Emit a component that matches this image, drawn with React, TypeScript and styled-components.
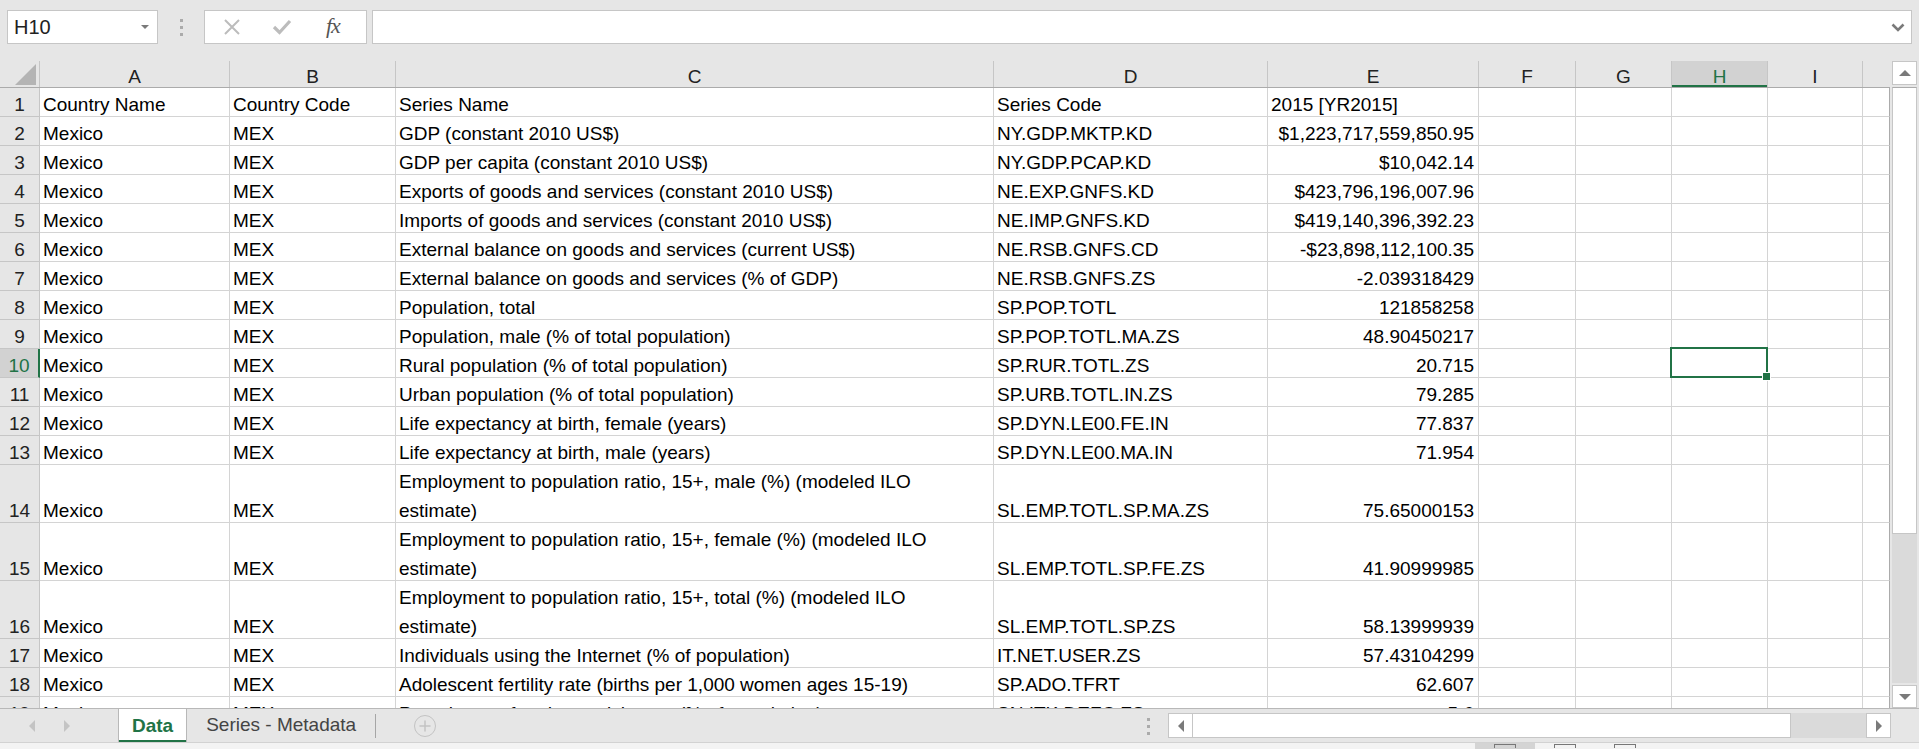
import React from 'react'
import styled, { createGlobalStyle } from 'styled-components'

const GREEN = '#217346'
const GRID = '#d4d4d4'
const FONT = `'Liberation Sans', Arial, sans-serif`

// widths of row header + columns A..J, measured from the sheet
const COLS = [40, 190, 166, 598, 274, 211, 97, 96, 96, 95, 27]
const TEMPLATE = COLS.map((c) => c + 'px').join(' ')
const LETTERS = ['A', 'B', 'C', 'D', 'E', 'F', 'G', 'H', 'I', '']
const SEL_COL = 7
const SEL_ROW = 10

type RowData = {
    n: number
    cells: [string, string, string | string[], string, string]
    header?: boolean
}

const emp = (who: string): string[] => [
    `Employment to population ratio, 15+, ${who} (%) (modeled ILO`,
    'estimate)',
]

const ROWS: RowData[] = [
    { n: 1, header: true, cells: ['Country Name', 'Country Code', 'Series Name', 'Series Code', '2015 [YR2015]'] },
    { n: 2, cells: ['Mexico', 'MEX', 'GDP (constant 2010 US$)', 'NY.GDP.MKTP.KD', '$1,223,717,559,850.95'] },
    { n: 3, cells: ['Mexico', 'MEX', 'GDP per capita (constant 2010 US$)', 'NY.GDP.PCAP.KD', '$10,042.14'] },
    { n: 4, cells: ['Mexico', 'MEX', 'Exports of goods and services (constant 2010 US$)', 'NE.EXP.GNFS.KD', '$423,796,196,007.96'] },
    { n: 5, cells: ['Mexico', 'MEX', 'Imports of goods and services (constant 2010 US$)', 'NE.IMP.GNFS.KD', '$419,140,396,392.23'] },
    { n: 6, cells: ['Mexico', 'MEX', 'External balance on goods and services (current US$)', 'NE.RSB.GNFS.CD', '-$23,898,112,100.35'] },
    { n: 7, cells: ['Mexico', 'MEX', 'External balance on goods and services (% of GDP)', 'NE.RSB.GNFS.ZS', '-2.039318429'] },
    { n: 8, cells: ['Mexico', 'MEX', 'Population, total', 'SP.POP.TOTL', '121858258'] },
    { n: 9, cells: ['Mexico', 'MEX', 'Population, male (% of total population)', 'SP.POP.TOTL.MA.ZS', '48.90450217'] },
    { n: 10, cells: ['Mexico', 'MEX', 'Rural population (% of total population)', 'SP.RUR.TOTL.ZS', '20.715'] },
    { n: 11, cells: ['Mexico', 'MEX', 'Urban population (% of total population)', 'SP.URB.TOTL.IN.ZS', '79.285'] },
    { n: 12, cells: ['Mexico', 'MEX', 'Life expectancy at birth, female (years)', 'SP.DYN.LE00.FE.IN', '77.837'] },
    { n: 13, cells: ['Mexico', 'MEX', 'Life expectancy at birth, male (years)', 'SP.DYN.LE00.MA.IN', '71.954'] },
    { n: 14, cells: ['Mexico', 'MEX', emp('male'), 'SL.EMP.TOTL.SP.MA.ZS', '75.65000153'] },
    { n: 15, cells: ['Mexico', 'MEX', emp('female'), 'SL.EMP.TOTL.SP.FE.ZS', '41.90999985'] },
    { n: 16, cells: ['Mexico', 'MEX', emp('total'), 'SL.EMP.TOTL.SP.ZS', '58.13999939'] },
    { n: 17, cells: ['Mexico', 'MEX', 'Individuals using the Internet (% of population)', 'IT.NET.USER.ZS', '57.43104299'] },
    { n: 18, cells: ['Mexico', 'MEX', 'Adolescent fertility rate (births per 1,000 women ages 15-19)', 'SP.ADO.TFRT', '62.607'] },
    { n: 19, cells: ['Mexico', 'MEX', 'Prevalence of undernourishment (% of population)', 'SN.ITK.DEFC.ZS', '5.6'] },
]

const GlobalStyle = createGlobalStyle`
    html, body {
        margin: 0;
        padding: 0;
        background: #e6e6e6;
    }
    * { box-sizing: border-box; }
`

const Window = styled.div`
    width: 1919px;
    height: 749px;
    overflow: hidden;
    display: flex;
    flex-direction: column;
    background: #e6e6e6;
    font-family: ${FONT};
    color: #000;
`

/* ---------- formula bar ---------- */

const FormulaBar = styled.div`
    height: 61px;
    flex: none;
    display: flex;
    align-items: flex-start;
    padding: 10px 7px 0 7px;
`

const NameBox = styled.div`
    width: 151px;
    height: 34px;
    background: #fff;
    border: 1px solid #c6c6c6;
    display: flex;
    align-items: center;
    justify-content: space-between;
    padding: 0 8px 0 6px;
    font-size: 20px;
    color: #222;
`

const Caret = styled.span`
    width: 0;
    height: 0;
    border-left: 4px solid transparent;
    border-right: 4px solid transparent;
    border-top: 4px solid #7a7a7a;
`

const Grip = styled.div<{ $w: number }>`
    width: ${(p) => p.$w}px;
    height: 34px;
    display: flex;
    flex-direction: column;
    align-items: center;
    justify-content: center;
    gap: 4px;
    flex: none;
    span {
        width: 3px;
        height: 3px;
        background: #ababab;
    }
`

const FxButtons = styled.div`
    width: 163px;
    height: 34px;
    background: #fff;
    border: 1px solid #c6c6c6;
    display: grid;
    grid-template-columns: 1fr 1fr 1fr;
    align-items: center;
    justify-items: center;
    padding: 0 8px 0 2px;
`

const FxLabel = styled.span`
    font-family: 'Liberation Serif', 'Times New Roman', serif;
    font-style: italic;
    font-size: 22px;
    color: #555;
    letter-spacing: -1px;
    margin-top: -2px;
`

const FormulaInput = styled.div`
    flex: 1;
    height: 34px;
    margin-left: 5px;
    background: #fff;
    border: 1px solid #c6c6c6;
    display: flex;
    align-items: center;
    justify-content: flex-end;
    padding-right: 6px;
`

/* ---------- sheet ---------- */

const Main = styled.div`
    height: 647px;
    flex: none;
    display: flex;
`

const Sheet = styled.div`
    width: 1890px;
    display: flex;
    flex-direction: column;
    overflow: hidden;
`

const HeaderRow = styled.div`
    display: grid;
    grid-template-columns: ${TEMPLATE};
    height: 27px;
    flex: none;
    border-bottom: 1px solid #ababab;
`

const Corner = styled.div`
    position: relative;
    border-right: 1px solid #c6c6c6;
    &::after {
        content: '';
        position: absolute;
        right: 3px;
        bottom: 2px;
        width: 21px;
        height: 21px;
        background: #b4b4b4;
        clip-path: polygon(100% 0, 100% 100%, 0 100%);
    }
`

const ColHead = styled.div<{ $sel?: boolean; $last?: boolean }>`
    display: flex;
    align-items: flex-end;
    justify-content: center;
    font-size: 19px;
    line-height: 27px;
    color: ${(p) => (p.$sel ? GREEN : '#222')};
    background: ${(p) => (p.$sel ? '#d2d2d2' : 'transparent')};
    border-right: ${(p) => (p.$last ? 'none' : '1px solid #c6c6c6')};
    box-shadow: ${(p) => (p.$sel ? `inset 0 -2px 0 ${GREEN}` : 'none')};
    span {
        margin-bottom: -3px;
    }
`

const Body = styled.div`
    flex: 1;
    overflow: hidden;
    background: #fff;
`

const Row = styled.div<{ $h: number }>`
    display: grid;
    grid-template-columns: ${TEMPLATE};
    height: ${(p) => p.$h}px;
`

const RowHead = styled.div<{ $sel?: boolean }>`
    display: flex;
    flex-direction: column;
    justify-content: flex-end;
    align-items: center;
    font-size: 19px;
    line-height: 29px;
    background: ${(p) => (p.$sel ? '#d2d2d2' : '#e6e6e6')};
    color: ${(p) => (p.$sel ? GREEN : '#222')};
    border-bottom: 1px solid #c6c6c6;
    border-right: ${(p) => (p.$sel ? `2px solid ${GREEN}` : '1px solid #c6c6c6')};
    span {
        margin-bottom: -3px;
    }
`

const Cell = styled.div<{ $right?: boolean; $last?: boolean; $sel?: boolean }>`
    position: relative;
    display: flex;
    flex-direction: column;
    justify-content: flex-end;
    align-items: ${(p) => (p.$right ? 'flex-end' : 'flex-start')};
    padding: 0 ${(p) => (p.$right ? 4 : 3)}px 0 3px;
    font-size: 19px;
    line-height: 29px;
    white-space: nowrap;
    overflow: ${(p) => (p.$sel ? 'visible' : 'hidden')};
    z-index: ${(p) => (p.$sel ? 2 : 'auto')};
    border-bottom: 1px solid ${GRID};
    border-right: 1px solid ${(p) => (p.$last ? '#ababab' : GRID)};

    ${(p) =>
        p.$sel &&
        `
        &::after {
            content: '';
            position: absolute;
            left: -2px;
            top: -2px;
            right: -1px;
            bottom: -1px;
            border: 2px solid ${GREEN};
        }
        &::before {
            content: '';
            position: absolute;
            right: -4px;
            bottom: -4px;
            width: 7px;
            height: 7px;
            background: ${GREEN};
            border: 1px solid #fff;
            z-index: 3;
        }
    `}
`

const CellText = styled.div`
    margin-bottom: -3px;
`

/* ---------- scrollbars ---------- */

const VScroll = styled.div`
    width: 29px;
    padding: 0 2px 0 2px;
    display: flex;
    flex-direction: column;
    gap: 2px;
`

const ScrollButton = styled.div<{ $h?: number; $w?: number }>`
    flex: none;
    width: ${(p) => (p.$w ? p.$w + 'px' : '100%')};
    height: ${(p) => (p.$h ? p.$h + 'px' : '100%')};
    background: #fff;
    border: 1px solid #c6c6c6;
    display: flex;
    align-items: center;
    justify-content: center;
`

const VTrack = styled.div`
    flex: 1;
    background: #dadada;
    display: flex;
    flex-direction: column;
`

const VThumb = styled.div`
    height: 447px;
    background: #fff;
    border: 1px solid #c6c6c6;
    border-top-color: #ababab;
`

const Arrow = styled.span<{ $dir: 'up' | 'down' | 'left' | 'right'; $color?: string }>`
    width: 0;
    height: 0;
    ${(p) => {
        const c = p.$color || '#7a7a7a'
        if (p.$dir === 'up') return `border-left: 6px solid transparent; border-right: 6px solid transparent; border-bottom: 6px solid ${c};`
        if (p.$dir === 'down') return `border-left: 6px solid transparent; border-right: 6px solid transparent; border-top: 6px solid ${c};`
        if (p.$dir === 'left') return `border-top: 6px solid transparent; border-bottom: 6px solid transparent; border-right: 6px solid ${c};`
        return `border-top: 6px solid transparent; border-bottom: 6px solid transparent; border-left: 6px solid ${c};`
    }}
`

/* ---------- sheet tabs ---------- */

const TabBar = styled.div`
    height: 34px;
    flex: none;
    display: flex;
    align-items: stretch;
    border-top: 1px solid #b8b8b8;
`

const TabNav = styled.div`
    width: 118px;
    display: flex;
    align-items: center;
    padding-left: 29px;
    gap: 29px;
`

const Tab = styled.div<{ $active?: boolean }>`
    display: flex;
    align-items: center;
    justify-content: center;
    margin-top: -1px;
    padding: ${(p) => (p.$active ? '0 13px' : '0 19px')};
    font-size: 19px;
    font-weight: ${(p) => (p.$active ? 700 : 400)};
    color: ${(p) => (p.$active ? GREEN : '#444')};
    background: ${(p) => (p.$active ? '#fff' : 'transparent')};
    border-left: ${(p) => (p.$active ? '1px solid #b8b8b8' : 'none')};
    border-right: ${(p) => (p.$active ? '1px solid #b8b8b8' : 'none')};
    border-top: ${(p) => (p.$active ? '1px solid #b8b8b8' : 'none')};
    box-shadow: ${(p) => (p.$active ? `inset 0 -2px 0 ${GREEN}` : 'none')};
`

const TabDivider = styled.div`
    width: 1px;
    margin: 5px 0 4px;
    background: #a6a6a6;
`

const AddSheet = styled.div`
    width: 22px;
    height: 22px;
    align-self: center;
    margin-left: 38px;
    border: 1.5px solid #c3c3c3;
    border-radius: 50%;
    display: flex;
    align-items: center;
    justify-content: center;
`

const Spacer = styled.div`
    flex: 1;
`

const HScroll = styled.div`
    width: 723px;
    height: 25px;
    align-self: center;
    display: flex;
    margin-right: 28px;
`

const HThumb = styled.div`
    width: 598px;
    height: 100%;
    background: #fff;
    border: 1px solid #c6c6c6;
    border-left: none;
`

const HTrack = styled.div`
    flex: 1;
    background: #dadada;
`

/* ---------- status bar ---------- */

const StatusBar = styled.div`
    flex: 1;
    background: #f3f3f3;
    border-top: 1px solid #d2d2d2;
    display: flex;
    justify-content: flex-end;
    padding-right: 264px;
`

const ViewButton = styled.div<{ $active?: boolean }>`
    width: 60px;
    background: ${(p) => (p.$active ? '#d4d4d4' : 'transparent')};
    display: flex;
    justify-content: center;
    padding-top: 1px;
    span {
        width: 22px;
        height: 4px;
        border: 1.5px solid #777;
        border-bottom: none;
    }
`

const App: React.FC = () => {
    return (
        <>
            <GlobalStyle />
            <Window>
                <FormulaBar>
                    <NameBox>
                        H10
                        <Caret />
                    </NameBox>
                    <Grip $w={46}>
                        <span />
                        <span />
                        <span />
                    </Grip>
                    <FxButtons>
                        <svg width="18" height="16" viewBox="0 0 18 16">
                            <path d="M2 1 L16 15 M16 1 L2 15" stroke="#bcbcbc" strokeWidth="2" fill="none" />
                        </svg>
                        <svg width="20" height="16" viewBox="0 0 20 16">
                            <path d="M2 8 L7.5 13.5 L18 2" stroke="#bcbcbc" strokeWidth="3.2" fill="none" />
                        </svg>
                        <FxLabel>fx</FxLabel>
                    </FxButtons>
                    <FormulaInput>
                        <svg width="14" height="9" viewBox="0 0 14 9">
                            <path d="M1.5 1.5 L7 7 L12.5 1.5" stroke="#7a7a7a" strokeWidth="2.6" fill="none" />
                        </svg>
                    </FormulaInput>
                </FormulaBar>

                <Main>
                    <Sheet>
                        <HeaderRow>
                            <Corner />
                            {LETTERS.map((l, i) => (
                                <ColHead key={i} $sel={i === SEL_COL} $last={i === LETTERS.length - 1}>
                                    <span>{l}</span>
                                </ColHead>
                            ))}
                        </HeaderRow>
                        <Body>
                            {ROWS.map((r) => {
                                const tall = Array.isArray(r.cells[2])
                                return (
                                    <Row key={r.n} $h={tall ? 58 : 29}>
                                        <RowHead $sel={r.n === SEL_ROW}>
                                            <span>{r.n}</span>
                                        </RowHead>
                                        {r.cells.map((c, i) => (
                                            <Cell key={i} $right={i === 4 && !r.header}>
                                                {(Array.isArray(c) ? c : [c]).map((line, j, arr) => (
                                                    <CellText key={j} style={{ marginBottom: j === arr.length - 1 ? -3 : 0 }}>
                                                        {line}
                                                    </CellText>
                                                ))}
                                            </Cell>
                                        ))}
                                        {LETTERS.slice(5).map((l, i) => (
                                            <Cell
                                                key={l + i}
                                                $last={i === 4}
                                                $sel={r.n === SEL_ROW && i + 5 === SEL_COL}
                                            />
                                        ))}
                                    </Row>
                                )
                            })}
                        </Body>
                    </Sheet>
                    <VScroll>
                        <ScrollButton $h={24}>
                            <Arrow $dir="up" />
                        </ScrollButton>
                        <VTrack>
                            <VThumb />
                        </VTrack>
                        <ScrollButton $h={23}>
                            <Arrow $dir="down" />
                        </ScrollButton>
                    </VScroll>
                </Main>

                <TabBar>
                    <TabNav>
                        <Arrow $dir="left" $color="#c4c4c4" />
                        <Arrow $dir="right" $color="#c4c4c4" />
                    </TabNav>
                    <Tab $active>Data</Tab>
                    <Tab>Series - Metadata</Tab>
                    <TabDivider />
                    <AddSheet>
                        <svg width="12" height="12" viewBox="0 0 12 12">
                            <path d="M6 0.5 V11.5 M0.5 6 H11.5" stroke="#c3c3c3" strokeWidth="1.5" />
                        </svg>
                    </AddSheet>
                    <Spacer />
                    <Grip $w={40}>
                        <span />
                        <span />
                        <span />
                    </Grip>
                    <HScroll>
                        <ScrollButton $w={25}>
                            <Arrow $dir="left" />
                        </ScrollButton>
                        <HThumb />
                        <HTrack />
                        <ScrollButton $w={25}>
                            <Arrow $dir="right" />
                        </ScrollButton>
                    </HScroll>
                </TabBar>

                <StatusBar>
                    <ViewButton $active>
                        <span />
                    </ViewButton>
                    <ViewButton>
                        <span />
                    </ViewButton>
                    <ViewButton>
                        <span />
                    </ViewButton>
                </StatusBar>
            </Window>
        </>
    )
}

export default App
